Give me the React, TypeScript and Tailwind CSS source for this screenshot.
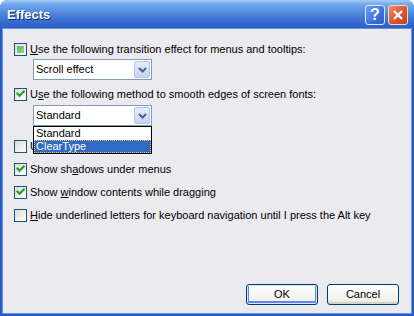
import React from "react";

function Check({ state }: { state: "on" | "off" | "mixed" }) {
  return (
    <span className="relative flex h-[13px] w-[13px] shrink-0 items-center justify-center border border-[#1c5180] bg-[linear-gradient(135deg,#dcdcd7,#ffffff)]">
      {state === "mixed" && (
        <span className="h-[7px] w-[7px] bg-[linear-gradient(135deg,#5fb95f,#8fd68f)]" />
      )}
      {state === "on" && (
        <svg width="11" height="11" viewBox="0 0 11 11" className="block">
          <path
            d="M2.5 4.5 L4.5 6.8 L8.8 2.6"
            fill="none"
            stroke="#21a121"
            strokeWidth="2.1"
            strokeLinecap="square"
          />
        </svg>
      )}
    </span>
  );
}

function Row({
  state,
  className,
  children,
}: {
  state: "on" | "off" | "mixed";
  className?: string;
  children: React.ReactNode;
}) {
  return (
    <div className={"flex h-[13px] items-center gap-[3px] " + (className ?? "")}>
      <Check state={state} />
      <span className="whitespace-nowrap leading-[13px]">{children}</span>
    </div>
  );
}

function Combo({ value, open }: { value: string; open?: boolean }) {
  return (
    <div className="relative ml-[19px] flex h-[21px] w-[119px] items-center border border-[#7f9db9] bg-white">
      <span className="flex-1 pl-[2px] leading-[13px]">{value}</span>
      <span className="mr-px flex h-[17px] w-[16px] items-center justify-center rounded-[2px] border border-[#b4c6ee] bg-[linear-gradient(#e6eefc,#c4d4f6)]">
        <svg width="9" height="6" viewBox="0 0 9 6">
          <path d="M1 1 L4.5 4.5 L8 1" fill="none" stroke="#4d6185" strokeWidth="2" />
        </svg>
      </span>
      {open && (
        <div className="absolute left-[-1px] top-[20px] z-10 flex h-[28px] w-[119px] flex-col border border-black bg-white">
          <div className="h-[13px] pl-[2px] leading-[13px]">Standard</div>
          <div className="h-[13px] border border-dotted border-[#f0c050] bg-[#316ac5] pl-[1px] leading-[11px] text-white">
            ClearType
          </div>
        </div>
      )}
    </div>
  );
}

function XpButton({ label, isDefault }: { label: string; isDefault?: boolean }) {
  return (
    <button
      className={
        "h-[21px] w-[72px] rounded-[3px] border border-[#003c74] bg-[linear-gradient(#ffffff,#f0f0ea_85%,#d6d0c5)] text-[11px] leading-none text-black " +
        (isDefault
          ? "shadow-[inset_0_0_0_1px_#cee7ff,inset_0_-1px_0_2px_#6982ee]"
          : "shadow-[inset_0_-2px_0_#d6d0c5]")
      }
    >
      {label}
    </button>
  );
}

export default function App() {
  return (
    <div className="h-[316px] w-[414px] bg-white font-['Liberation_Sans','Arial',sans-serif] text-[11px] text-black">
      <div className="flex h-full flex-col overflow-hidden rounded-t-[8px] bg-[#2a5bc4]">
        <div className="flex h-[29px] shrink-0 items-center bg-[linear-gradient(#a6ccf6,#74aaee_14%,#5088dd_45%,#3468cb_80%,#2c5cc2)] pl-[7px] pr-[6px]">
          <span className="flex-1 text-[13px] font-bold text-white [text-shadow:1px_1px_0_#0c2a78]">
            Effects
          </span>
          <div className="flex gap-[3px]">
            <span className="flex h-[20px] w-[20px] items-center justify-center rounded-[3px] border border-[#dbe6fb] bg-[linear-gradient(135deg,#6aa2f2,#3a70da_60%,#2c5fcc)] text-[16px] font-bold leading-none text-white">
              ?
            </span>
            <span className="flex h-[20px] w-[20px] items-center justify-center rounded-[3px] border border-[#f4d6cc] bg-[linear-gradient(135deg,#ec8e6e,#d8562f_55%,#c4421c)]">
              <svg width="12" height="12" viewBox="0 0 12 12">
                <path d="M2 2 L10 10 M10 2 L2 10" stroke="white" strokeWidth="2.4" />
              </svg>
            </span>
          </div>
        </div>
        <div className="mx-[3px] mb-[3px] flex flex-1 flex-col bg-[#ebeaef] pl-[11px] shadow-[0_0_0_1px_#5f95e8]">
          <Row state="mixed" className="mt-[14px]">
            <span className="underline underline-offset-1">U</span>se the following transition effect for menus and tooltips:
          </Row>
          <div className="mt-[3px]">
            <Combo value="Scroll effect" />
          </div>
          <Row state="on" className="mt-[8px]">
            U<span className="underline underline-offset-1">s</span>e the following method to smooth edges of screen fonts:
          </Row>
          <div className="relative z-10 mt-[4px]">
            <Combo value="Standard" open />
          </div>
          <Row state="off" className="mt-[14px]">
            Use <span className="underline underline-offset-1">l</span>arge icons
          </Row>
          <Row state="on" className="mt-[10px]">
            Show sh<span className="underline underline-offset-1">a</span>dows under menus
          </Row>
          <Row state="on" className="mt-[10px]">
            Show <span className="underline underline-offset-1">w</span>indow contents while dragging
          </Row>
          <Row state="off" className="mt-[10px]">
            <span className="underline underline-offset-1">H</span>ide underlined letters for keyboard navigation until I press the Alt key
          </Row>
          <div className="mb-[8px] mr-[12px] mt-auto flex justify-end gap-[9px]">
            <XpButton label="OK" isDefault />
            <XpButton label="Cancel" />
          </div>
        </div>
      </div>
    </div>
  );
}
